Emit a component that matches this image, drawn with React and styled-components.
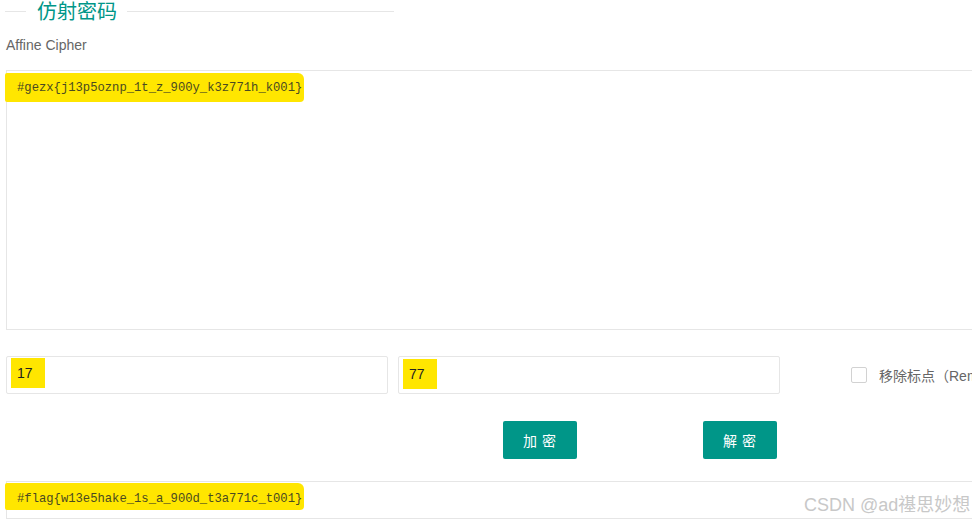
import React from 'react'
import styled, { createGlobalStyle } from 'styled-components'

const GlobalStyle = createGlobalStyle`
  html, body {
    margin: 0;
    padding: 0;
    background: #fff;
    overflow: hidden;
  }
  body {
    font-family: "Liberation Sans", "Noto Sans CJK SC", sans-serif;
    color: #333;
  }
`

const App = () => {
  return (
    <>
      <GlobalStyle />
      <Page>
        <Legend>
          <LegendLine $w="21px" />
          <LegendTitle>仿射密码</LegendTitle>
          <LegendLine $w="267px" />
        </Legend>

        <SubTitle>Affine Cipher</SubTitle>

        <TextBox>
          <Marker $top="5px" $bottom="4px">#gezx{"{"}j13p5oznp_1t_z_900y_k3z771h_k001{"}"}</Marker>
        </TextBox>

        <ParamRow>
          <Input>
            <NumMark $top="1px">17</NumMark>
          </Input>
          <Input>
            <NumMark $top="2px">77</NumMark>
          </Input>
          <CheckWrap>
            <CheckBox />
            <CheckLabel>移除标点（Remove punctuation）</CheckLabel>
          </CheckWrap>
        </ParamRow>

        <ButtonRow>
          <Button>加 密</Button>
          <Button>解 密</Button>
        </ButtonRow>

        <ResultBox>
          <Marker $top="6px" $bottom="1px">#flag{"{"}w13e5hake_1s_a_900d_t3a771c_t001{"}"}</Marker>
          <Watermark>CSDN @ad禥思妙想</Watermark>
        </ResultBox>
      </Page>
    </>
  )
}

export default App

const Page = styled.div`
  width: 1010px;
  padding: 0 0 0 5px;
  position: relative;
`

const Legend = styled.div`
  display: flex;
  align-items: center;
  height: 22px;
`

const LegendLine = styled.div`
  flex-shrink: 0;
  width: ${p => p.$w};
  height: 1px;
  background: #e6e6e6;
`

const LegendTitle = styled.span`
  padding: 0 10px 0 11px;
  font-size: 20px;
  line-height: 24px;
  color: #009688;
  font-family: "Noto Sans CJK SC", sans-serif;
  white-space: nowrap;
`

const SubTitle = styled.div`
  margin: 13px 0 0 1px;
  font-size: 14px;
  line-height: 20px;
  color: #666;
`

const TextBox = styled.div`
  margin: 15px 0 0 1px;
  border: 1px solid #e6e6e6;
  padding: 6px 10px;
  box-sizing: border-box;
  height: 260px;
`

const Marker = styled.span`
  display: inline-block;
  margin: -${p => p.$top} 0 0 -12px;
  padding: ${p => p.$top} 2px ${p => p.$bottom} 12px;
  background: #ffe600;
  border-radius: 2px 6px 4px 2px;
  font-family: "Liberation Mono", monospace;
  font-size: 12.2px;
  line-height: 20px;
  color: #4a4a20;
`

const ParamRow = styled.div`
  display: flex;
  align-items: center;
  margin: 26px 0 0 1px;
`

const Input = styled.div`
  flex-shrink: 0;
  width: 382px;
  height: 38px;
  box-sizing: border-box;
  border: 1px solid #e6e6e6;
  border-radius: 2px;
  padding-left: 4px;
  margin-right: 10px;
`

const NumMark = styled.span`
  display: inline-block;
  margin-top: ${p => p.$top};
  width: 34px;
  height: 30px;
  line-height: 30px;
  padding-left: 6px;
  box-sizing: border-box;
  background: #ffe600;
  font-size: 14px;
  color: #222;
`

const CheckWrap = styled.div`
  flex-shrink: 0;
  display: flex;
  align-items: center;
  margin-left: 61px;
  white-space: nowrap;
`

const CheckBox = styled.span`
  width: 16px;
  height: 16px;
  box-sizing: border-box;
  border: 1px solid #d2d2d2;
  border-radius: 2px;
  background: #fff;
`

const CheckLabel = styled.span`
  margin-left: 12px;
  font-size: 14px;
  color: #666;
  font-family: "Liberation Sans", "Noto Sans CJK SC", sans-serif;
`

const ButtonRow = styled.div`
  display: flex;
  gap: 126px;
  margin: 27px 0 0 498px;
`

const Button = styled.button`
  width: 74px;
  height: 38px;
  border: none;
  border-radius: 2px;
  background: #009688;
  color: #fff;
  font-size: 14px;
  font-family: "Noto Sans CJK SC", sans-serif;
  letter-spacing: 1px;
  padding: 0;
`

const ResultBox = styled.div`
  position: relative;
  margin: 22px 0 0 1px;
  height: 38px;
  box-sizing: border-box;
  border: 1px solid #e6e6e6;
  padding: 6px 10px 0;
`

const Watermark = styled.span`
  position: absolute;
  left: 797px;
  top: 8px;
  font-size: 18px;
  color: #c8c8c8;
  font-family: "Liberation Sans", "Noto Sans CJK SC", sans-serif;
  white-space: nowrap;
`
